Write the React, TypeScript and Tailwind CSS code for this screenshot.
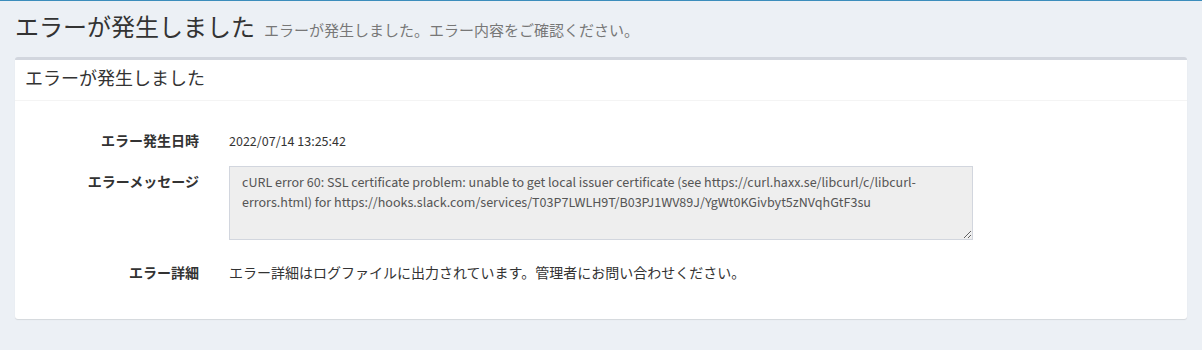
import React from 'react';

// Error page (AdminLTE-like layout)

const FONT = { fontFamily: '"Source Sans 3", "Noto Sans CJK JP", sans-serif' };

const MESSAGE =
  'cURL error 60: SSL certificate problem: unable to get local issuer certificate (see https://curl.haxx.se/libcurl/c/libcurl-errors.html) for https://hooks.slack.com/services/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';

function Row({ label, children }: { label: string; children: React.ReactNode }) {
  return (
    <div className="flex">
      <div className="w-[174px] shrink-0 pt-[7px] text-right text-[14px] leading-[20px] font-bold text-[#333]">
        {label}
      </div>
      <div className="ml-[30px] flex-1">{children}</div>
    </div>
  );
}

export default function App() {
  return (
    <div className="min-h-[350px] bg-[#ecf0f5] border-t border-[#3c8dbc] text-[#333]" style={FONT}>
      {/* Content header */}
      <div className="px-[15px] pt-[15px]">
        <h1 className="m-0 h-[26px] flex items-baseline overflow-visible text-[24px] leading-[26px] font-normal">
          <span>エラーが発生しました</span>
          <small className="pl-[9px] text-[15px] leading-[26px] text-[#777]">
            エラーが発生しました。エラー内容をご確認ください。
          </small>
        </h1>
      </div>

      <div className="p-[15px]">
        <div className="bg-white rounded-[3px] border-t-[3px] border-[#d2d6de] shadow-[0_1px_1px_rgba(0,0,0,0.1)]">
          <div className="h-[41px] px-[10px] pt-[11px] border-b border-[#f4f4f4]">
            <h3 className="h-[18px] text-[18px] leading-[18px] font-normal">エラーが発生しました</h3>
          </div>

          <div className="px-[10px] pt-[24px] pb-[35px]">
            <Row label="エラー発生日時">
              <div className="pt-[7px] text-[14px] leading-[20px]">2022/07/14 13:25:42</div>
            </Row>

            <div className="mt-[14px]">
              <Row label="エラーメッセージ">
                <textarea
                  readOnly
                  rows={3}
                  defaultValue={MESSAGE}
                  className="block w-[744px] h-[74px] px-[12px] py-[6px] bg-[#eeeeee] border border-[#d2d6de] text-[14px] leading-[20px] text-[#555] outline-none"
                  style={FONT}
                />
              </Row>
            </div>

            <div className="mt-[17px]">
              <Row label="エラー詳細">
                <div className="pt-[7px] text-[14px] leading-[20px]">
                  エラー詳細はログファイルに出力されています。管理者にお問い合わせください。
                </div>
              </Row>
            </div>
          </div>
        </div>
      </div>
    </div>
  );
}
